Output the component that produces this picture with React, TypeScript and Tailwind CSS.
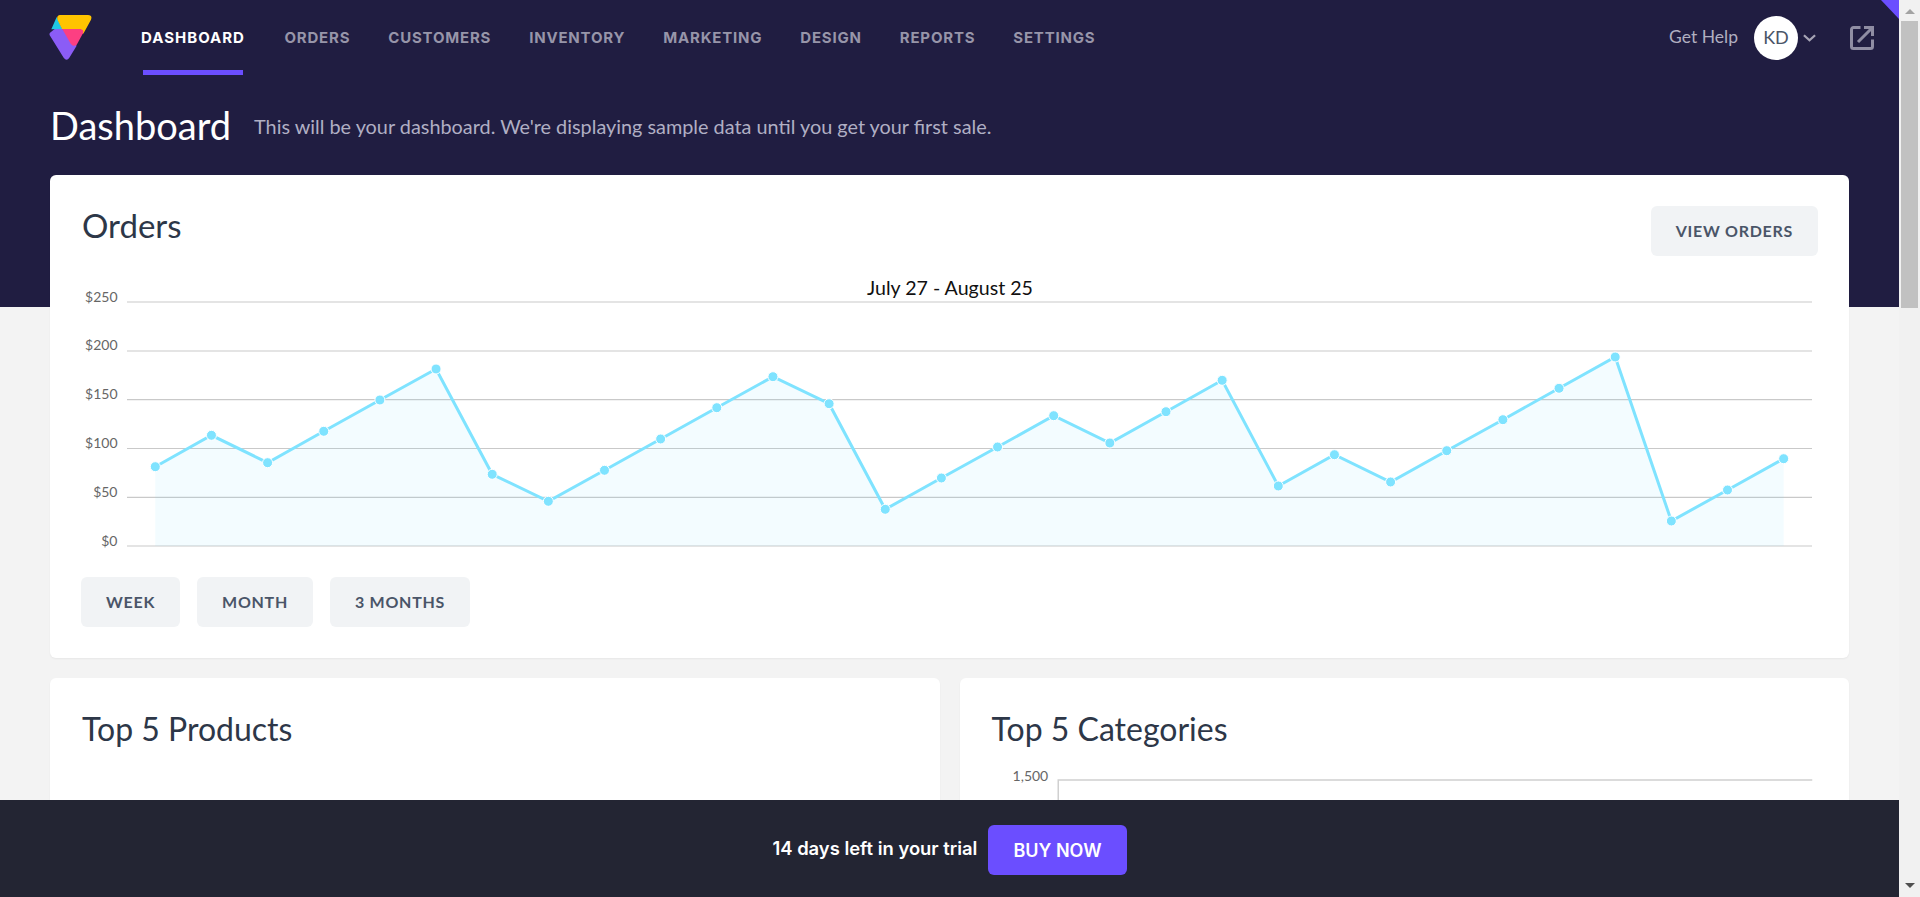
const navItems = ["Dashboard", "Orders", "Customers", "Inventory", "Marketing", "Design", "Reports", "Settings"];

const ranges = ["Week", "Month", "3 Months"];

// plotted y positions of the 30 daily points
const points = [
  466.7, 435.3, 462.7, 431.3, 400, 369, 474.3, 501.3, 470.3, 439, 407.7, 376.7, 403.7, 509.3, 478, 447, 415.7, 443,
  411.7, 380.3, 486, 454.7, 482, 450.7, 419.7, 388.3, 357, 521, 490, 458.7,
].map((y, i) => ({ x: 155.3 + i * 56.15, y }));

const ticks = [
  { label: "$250", y: 302, labelY: 301.5 },
  { label: "$200", y: 351, labelY: 350 },
  { label: "$150", y: 399.7, labelY: 399 },
  { label: "$100", y: 448.5, labelY: 448 },
  { label: "$50", y: 497.3, labelY: 497 },
  { label: "$0", y: 546, labelY: 545.5 },
];

const Logo = () => (
  <svg viewBox="54 45 132 140" width="44" height="46.67" className="shrink-0">
    <path d="M62 100 L74 90 L98 90 L140 140 L118 176 Q110 188 101 176 L60 110 Q56 104 62 100 Z" fill="#8b5cf6" />
    <path d="M80 54 L97 90 L64 91 Z" fill="#1fc8e3" />
    <path d="M90 48 H174 Q188 48 183 62 L160 104 L150 90 H96 L83 64 Q78 50 90 48 Z" fill="#ffc400" />
    <path d="M97 90 H150 Q163 91 159 103 L141 136 Q132 146 122 134 Z" fill="#fc3f82" />
  </svg>
);

const OrdersChart = () => (
  <svg viewBox="82 276 1736 280" className="mt-[20px] block h-[280px] w-full">
    <text x="950" y="295" textAnchor="middle" fontSize="19.6" fill="#111">
      July 27 - August 25
    </text>
    {ticks.map((t) => (
      <g key={t.label}>
        <line x1="127" x2="1812" y1={t.y} y2={t.y} stroke="#c9c9c9" strokeWidth="1.2" />
        <text x="117.5" y={t.labelY} textAnchor="end" fontSize="14" fill="#666">
          {t.label}
        </text>
      </g>
    ))}
    <polygon
      points={`155.3,546 ${points.map((p) => `${p.x},${p.y}`).join(" ")} 1783.7,546`}
      fill="#7fe3ff"
      fillOpacity="0.09"
    />
    <polyline points={points.map((p) => `${p.x},${p.y}`).join(" ")} fill="none" stroke="#7fe3ff" strokeWidth="3" />
    {points.map((p) => (
      <circle key={p.x} cx={p.x} cy={p.y} r="5" fill="#7fe3ff" stroke="#fff" strokeWidth="1" />
    ))}
  </svg>
);

const GhostButton = ({ label }: { label: string }) => (
  <button className="h-[50px] rounded-md bg-[#f1f3f5] px-[25px] text-[16px] font-bold tracking-[0.045em] text-[#4a5568] uppercase">
    {label}
  </button>
);

const Scrollbar = () => (
  <div className="flex h-full w-[21px] shrink-0 flex-col items-center bg-[#f1f1f1]">
    <div className="mt-[9px] h-0 w-0 border-x-[5px] border-b-[5px] border-x-transparent border-b-[#a3a3a3]" />
    <div className="mt-[7px] h-[287px] w-[17px] bg-[#c1c1c1]" />
    <div className="mt-auto mb-[9px] h-0 w-0 border-x-[5px] border-t-[5px] border-x-transparent border-t-[#505050]" />
  </div>
);

export default function App() {
  return (
    <div className="flex h-[897px] overflow-hidden bg-[#f3f3f3] font-[Lato,sans-serif]">
      <div className="relative min-w-0 flex-1 overflow-hidden">
        <header className="relative h-[307px] bg-[#201d41]">
          <div className="absolute top-0 right-0 h-[19px] w-[18px] bg-[#6b4eff] [clip-path:polygon(0_0,100%_0,100%_100%)]" />
          <div className="flex h-[75px] items-center pr-[25px] pl-[48px]">
            <div className="-mt-[1px]">
              <Logo />
            </div>
            <nav className="ml-[49px] flex h-full gap-[38px] font-[Inter,sans-serif] text-[15px] font-bold uppercase">
              {navItems.map((item, i) => (
                <a
                  key={item}
                  href="#"
                  className={`relative flex h-full items-center pt-[2px] ${
                    i === 0 ? "mr-[1.5px] tracking-[1px] text-white" : "tracking-[0.8px] text-[#9795a9]"
                  }`}
                >
                  {item}
                  {i === 0 && <span className="absolute right-[2px] bottom-0 left-[2px] h-[5px] bg-[#6b4eff]" />}
                </a>
              ))}
            </nav>
            <div className="ml-auto flex items-center">
              <span className="text-[17.5px] text-[#b0afc0]">Get Help</span>
              <div className="ml-[16px] flex h-[44px] w-[44px] items-center justify-center rounded-full bg-white text-[18px] text-[#4a5568]">
                KD
              </div>
              <svg viewBox="0 0 14 8" width="13" height="8" className="ml-[5px]" fill="none" stroke="#a6a4b5" strokeWidth="2.4">
                <path d="M1 1l6 5.5L13 1" />
              </svg>
              <svg viewBox="0 0 24 24" width="24" height="24" className="ml-[34px]" fill="none" stroke="#8f8da3" strokeWidth="3">
                <path d="M10.5 1.5H3.5a2 2 0 0 0-2 2v17a2 2 0 0 0 2 2h17a2 2 0 0 0 2-2V13.5" />
                <path d="M8 16L22 2M14 1.5h8.5V10" />
              </svg>
            </div>
          </div>
          <div className="mt-[22px] flex items-center pl-[50px]">
            <h1 className="text-[38px] leading-[56px] text-white">Dashboard</h1>
            <p className="mt-[3px] ml-[23px] text-[19.85px] text-[#b0afc4]">
              This will be your dashboard. We're displaying sample data until you get your first sale.
            </p>
          </div>
        </header>

        <main className="-mt-[132px] flex flex-col gap-[20px] px-[50px]">
          <section className="relative rounded-md bg-white pt-[31px] pr-[31px] pb-[31px] pl-[32px] shadow-[0_1px_2px_rgba(0,0,0,0.05)]">
            <div className="flex items-start justify-between">
              <h2 className="-mt-[1px] text-[33px] leading-[40px] text-[#2d3748]">Orders</h2>
              <GhostButton label="View Orders" />
            </div>
            <OrdersChart />
            <div className="mt-[21px] -ml-[1px] flex gap-[17px]">
              {ranges.map((r) => (
                <GhostButton key={r} label={r} />
              ))}
            </div>
          </section>

          <div className="grid grid-cols-2 gap-[20px]">
            <section className="h-[300px] rounded-md bg-white px-[32px] pt-[31px] shadow-[0_1px_2px_rgba(0,0,0,0.05)]">
              <h2 className="text-[32px] leading-[40px] text-[#2d3748]">Top 5 Products</h2>
            </section>
            <section className="h-[300px] rounded-md bg-white pt-[31px] pr-[31px] pl-[32px] shadow-[0_1px_2px_rgba(0,0,0,0.05)]">
              <h2 className="text-[32px] leading-[40px] text-[#2d3748]">Top 5 Categories</h2>
              <svg viewBox="992 762 826 60" className="mt-[13px] block h-[60px] w-full">
                <text x="1048" y="781" textAnchor="end" fontSize="14" fill="#666">
                  1,500
                </text>
                <path d="M1812 780H1058V822" fill="none" stroke="#d0d0d0" strokeWidth="1.5" />
              </svg>
            </section>
          </div>
        </main>

        <div className="absolute right-0 bottom-0 left-0 flex h-[97px] items-center justify-center gap-[11px] bg-[#232533] pt-[3px] font-[Inter,sans-serif] text-white">
          <span className="-mt-[2px] text-[18.4px] font-semibold">14 days left in your trial</span>
          <button className="h-[50px] rounded-md bg-[#6b4eff] px-[25px] text-[18px] font-semibold">BUY NOW</button>
        </div>
      </div>
      <Scrollbar />
    </div>
  );
}
